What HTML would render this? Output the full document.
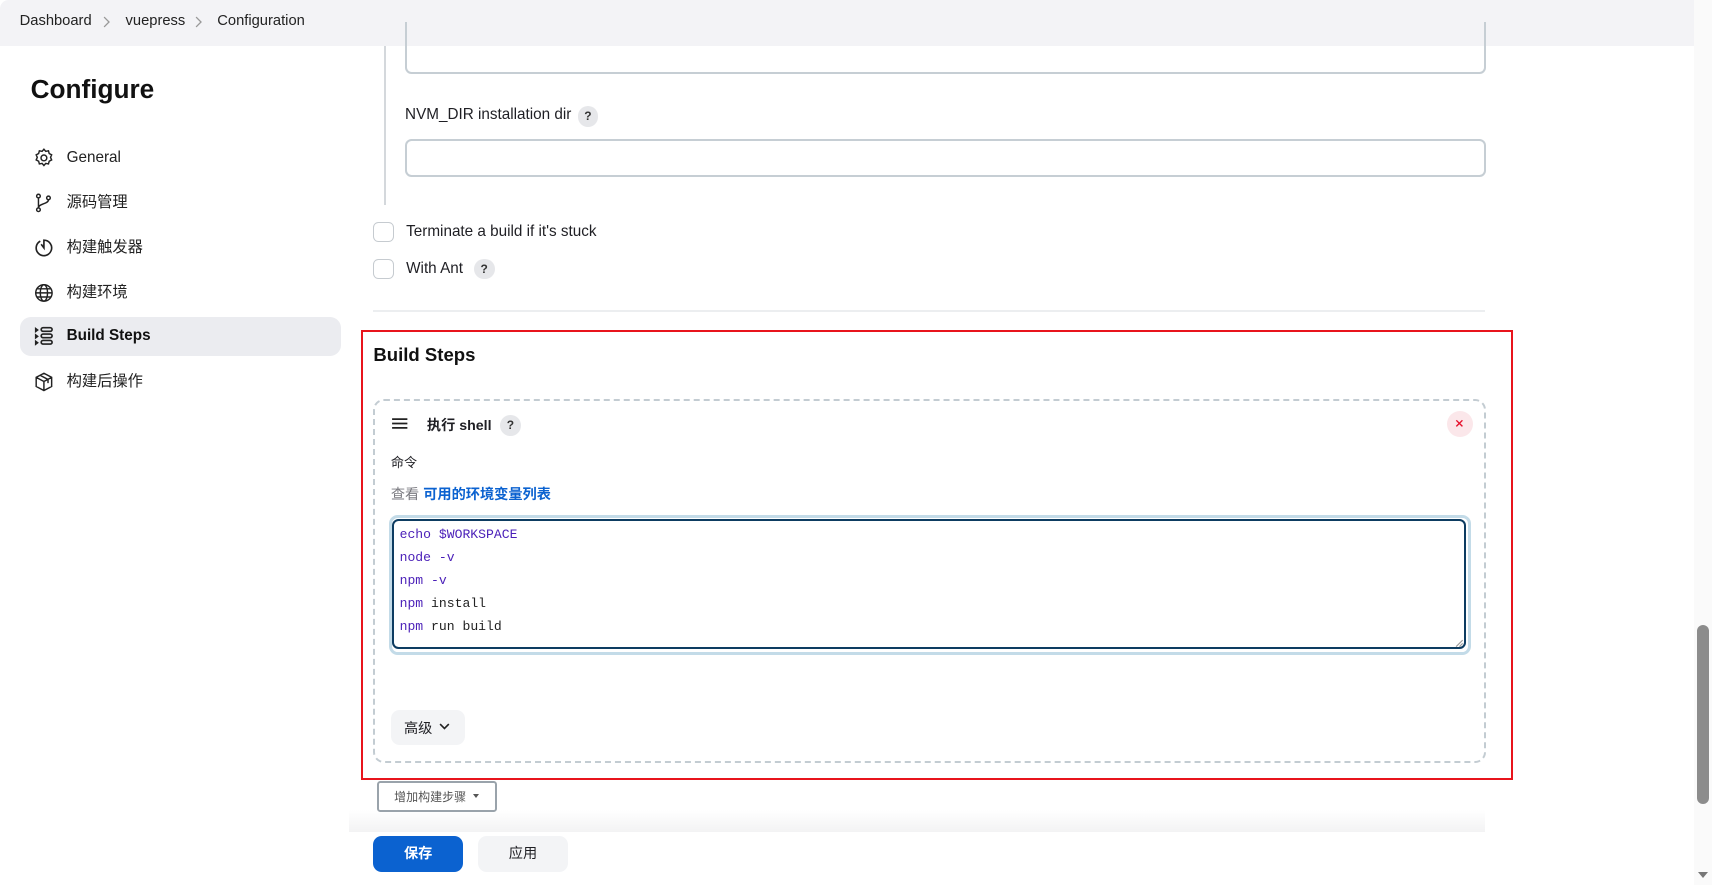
<!DOCTYPE html>
<html><head><meta charset="utf-8"><style>
html,body{margin:0;padding:0;width:1712px;height:885px;overflow:hidden;background:#fff}
#w{zoom:1.0918;position:relative;width:1568px;height:811px;font-family:"Liberation Sans","Noto Sans CJK SC",sans-serif;color:#1f1f24}
.a{position:absolute}
.t14{font-size:14px}
.q{position:absolute;width:19px;height:19px;border-radius:50%;background:#e6e7ea;font-size:11px;font-weight:bold;text-align:center;line-height:19px;color:#333}
.nav{position:absolute;left:61px;font-size:14px;color:#222;line-height:18px}
.ic{position:absolute;left:30px;width:20px;height:20px}
.cb{position:absolute;left:342px;width:17px;height:17px;border:1.5px solid #c6cbd0;border-radius:5px}
.code{font-family:"Liberation Mono","DejaVu Sans Mono",monospace;font-size:12px;line-height:21px;color:#222}
.code b{font-weight:normal;color:#4a1fb8}
.bc{font-size:13.5px;color:#222;top:12px}
</style></head><body><div id="w">
<div class="a" style="left:0;top:0;width:1552px;height:42px;background:#f3f3f6;border-radius:8px 0 0 0"></div>
<div class="a bc" style="left:18px">Dashboard</div>
<svg class="a" style="left:94px;top:15px" width="7" height="11"><path d="M1 1l4.5 4.5L1 10" stroke="#999" stroke-width="1.2" fill="none"/></svg>
<div class="a bc" style="left:115px">vuepress</div>
<svg class="a" style="left:179px;top:15px" width="7" height="11"><path d="M1 1l4.5 4.5L1 10" stroke="#999" stroke-width="1.2" fill="none"/></svg>
<div class="a bc" style="left:199px">Configuration</div>
<!-- scrollbar -->
<div class="a" style="left:1552px;top:0;width:16px;height:811px;background:#fafafa"></div>
<div class="a" style="left:1554px;top:572px;width:11px;height:164px;background:#8c8c8c;border-radius:6px"></div>
<div class="a" style="left:1555px;top:799px;width:0;height:0;border-left:5px solid transparent;border-right:5px solid transparent;border-top:6px solid #777"></div>

<div class="a" style="left:28px;top:68px;font-size:24px;font-weight:bold;color:#111">Configure</div>
<svg class="ic" style="top:135px" viewBox="0 0 24 24" fill="none" stroke="#222" stroke-width="1.6"><circle cx="12" cy="12" r="3.2"/><path d="M12 2.5l2 2.3 3-.6.8 3 2.7 1.4-1.2 2.8 1.2 2.8-2.7 1.4-.8 3-3-.6-2 2.3-2-2.3-3 .6-.8-3-2.7-1.4 1.2-2.8-1.2-2.8 2.7-1.4.8-3 3 .6z"/></svg>
<div class="nav" style="top:136px">General</div>
<svg class="ic" style="top:176px" viewBox="0 0 24 24" fill="none" stroke="#222" stroke-width="1.6"><circle cx="6" cy="4.5" r="2"/><circle cx="6" cy="19.5" r="2"/><circle cx="17" cy="6.5" r="2"/><path d="M6 6.5v11M17 8.5c0 5-11 4-11 9"/></svg>
<div class="nav" style="top:177px">源码管理</div>
<svg class="ic" style="top:217px" viewBox="0 0 24 24" fill="none" stroke="#222" stroke-width="1.8"><path d="M8 4.5A8.5 8.5 0 1 0 12 3.5v8.5l-3-4"/></svg>
<div class="nav" style="top:218px">构建触发器</div>
<svg class="ic" style="top:258px" viewBox="0 0 24 24" fill="none" stroke="#222" stroke-width="1.6"><circle cx="12" cy="12" r="9"/><ellipse cx="12" cy="12" rx="4" ry="9"/><path d="M3 12h18M4.5 7.5h15M4.5 16.5h15"/></svg>
<div class="nav" style="top:259px">构建环境</div>
<div class="a" style="left:18px;top:290px;width:294px;height:36px;background:#ebecf0;border-radius:10px"></div>
<svg class="ic" style="top:298px" viewBox="0 0 24 24" fill="none" stroke="#222" stroke-width="1.8"><path d="M3 4l2 1.5-2 1.5zM3 11l2 1.5-2 1.5zM3 18l2 1.5-2 1.5z" fill="#222"/><rect x="9" y="3" width="12" height="4" rx="2"/><rect x="9" y="10" width="12" height="4" rx="2"/><rect x="9" y="17" width="12" height="4" rx="2"/></svg>
<div class="nav" style="top:299px;font-weight:bold;color:#111">Build Steps</div>
<svg class="ic" style="top:340px" viewBox="0 0 24 24" fill="none" stroke="#222" stroke-width="1.6"><path d="M12 2.5l8.5 4.5v10L12 21.5 3.5 17V7z M3.5 7L12 11.5 20.5 7M12 11.5v10M8 4.8l8.5 4.5v4"/></svg>
<div class="nav" style="top:341px">构建后操作</div>

<div class="a" style="left:352px;top:42px;width:2px;height:146px;background:#d4d8dc"></div>
<div class="a" style="left:371px;top:20px;width:986px;height:46px;border:2px solid #c6ced4;border-top:none;border-radius:0 0 6px 6px"></div>
<div class="a t14" style="left:371px;top:97px">NVM_DIR installation dir</div>
<div class="q" style="left:529px;top:97px">?</div>
<div class="a" style="left:371px;top:127px;width:986px;height:31px;border:2px solid #c6ced4;border-radius:6px"></div>
<div class="cb" style="top:203px"></div>
<div class="a t14" style="left:372px;top:204px">Terminate a build if it's stuck</div>
<div class="cb" style="top:237px"></div>
<div class="a t14" style="left:372px;top:238px">With Ant</div>
<div class="q" style="left:434px;top:237px">?</div>
<div class="a" style="left:342px;top:284px;width:1018px;height:2px;background:#eceef0"></div>

<div class="a" style="left:331px;top:302px;width:1051px;height:409px;border:2px solid #e8141c"></div>
<div class="a" style="left:342px;top:315px;font-size:17px;font-weight:bold;color:#111">Build Steps</div>
<div class="a" style="left:342px;top:365px;width:1015px;height:330px;border:2px dashed #c3ccd2;border-radius:10px"></div>
<svg class="a" style="left:358px;top:382px" width="16" height="12" viewBox="0 0 16 12"><path d="M1 2h14M1 6h14M1 10h14" stroke="#222" stroke-width="1.6"/></svg>
<div class="a" style="left:391px;top:380px;font-size:13px;font-weight:bold">执行 shell</div>
<div class="q" style="left:458px;top:380px">?</div>
<div class="a" style="left:1325px;top:376px;width:24px;height:24px;border-radius:50%;background:#fbe7ea"></div>
<svg class="a" style="left:1333px;top:384px" width="8" height="8" viewBox="0 0 10 10"><path d="M1.5 1.5l7 7M8.5 1.5l-7 7" stroke="#e6102c" stroke-width="1.6"/></svg>
<div class="a" style="left:358px;top:414px;font-size:12px">命令</div>
<div class="a" style="left:358px;top:443px;font-size:13px;color:#7a7a80">查看 <span style="color:#0b62d0;font-weight:bold">可用的环境变量列表</span></div>
<div class="a" style="left:356px;top:472px;width:986px;height:122px;border:3px solid #c3dbe8;border-radius:8px"></div>
<div class="a" style="left:359px;top:475px;width:980px;height:116px;border:2px solid #0d3c61;border-radius:6px;background:#fff"></div>
<div class="a code" style="left:366px;top:480px"><b>echo $WORKSPACE</b><br><b>node -v</b><br><b>npm -v</b><br><b>npm</b> install<br><b>npm</b> run build</div>
<svg class="a" style="left:1333px;top:585px" width="8" height="8"><path d="M1 7L7 1M4 7L7 4" stroke="#999" stroke-width="1"/></svg>
<div class="a" style="left:358px;top:650px;width:68px;height:32px;background:#f3f4f6;border-radius:8px"></div>
<div class="a" style="left:370px;top:658px;font-size:13px">高级</div>
<svg class="a" style="left:402px;top:662px" width="10" height="7"><path d="M1 1l4 4 4-4" stroke="#222" stroke-width="1.5" fill="none"/></svg>

<div class="a" style="left:320px;top:742px;width:1040px;height:20px;background:linear-gradient(#fff,#f3f3f4)"></div>
<div class="a" style="left:345px;top:715px;width:107px;height:25px;border:2px solid #9aa3ab;border-radius:3px;background:#fff"></div>
<div class="a" style="left:361px;top:722px;font-size:11px;color:#555">增加构建步骤</div>
<div class="a" style="left:433px;top:727px;width:0;height:0;border-left:3.5px solid transparent;border-right:3.5px solid transparent;border-top:4px solid #555"></div>
<div class="a" style="left:342px;top:766px;width:82px;height:33px;background:#0b62d0;border-radius:8px;color:#fff;font-size:13px;font-weight:bold;text-align:center;line-height:33px">保存</div>
<div class="a" style="left:438px;top:766px;width:82px;height:33px;background:#f3f4f6;border-radius:8px;font-size:13px;text-align:center;line-height:33px">应用</div>
</div></body></html>
